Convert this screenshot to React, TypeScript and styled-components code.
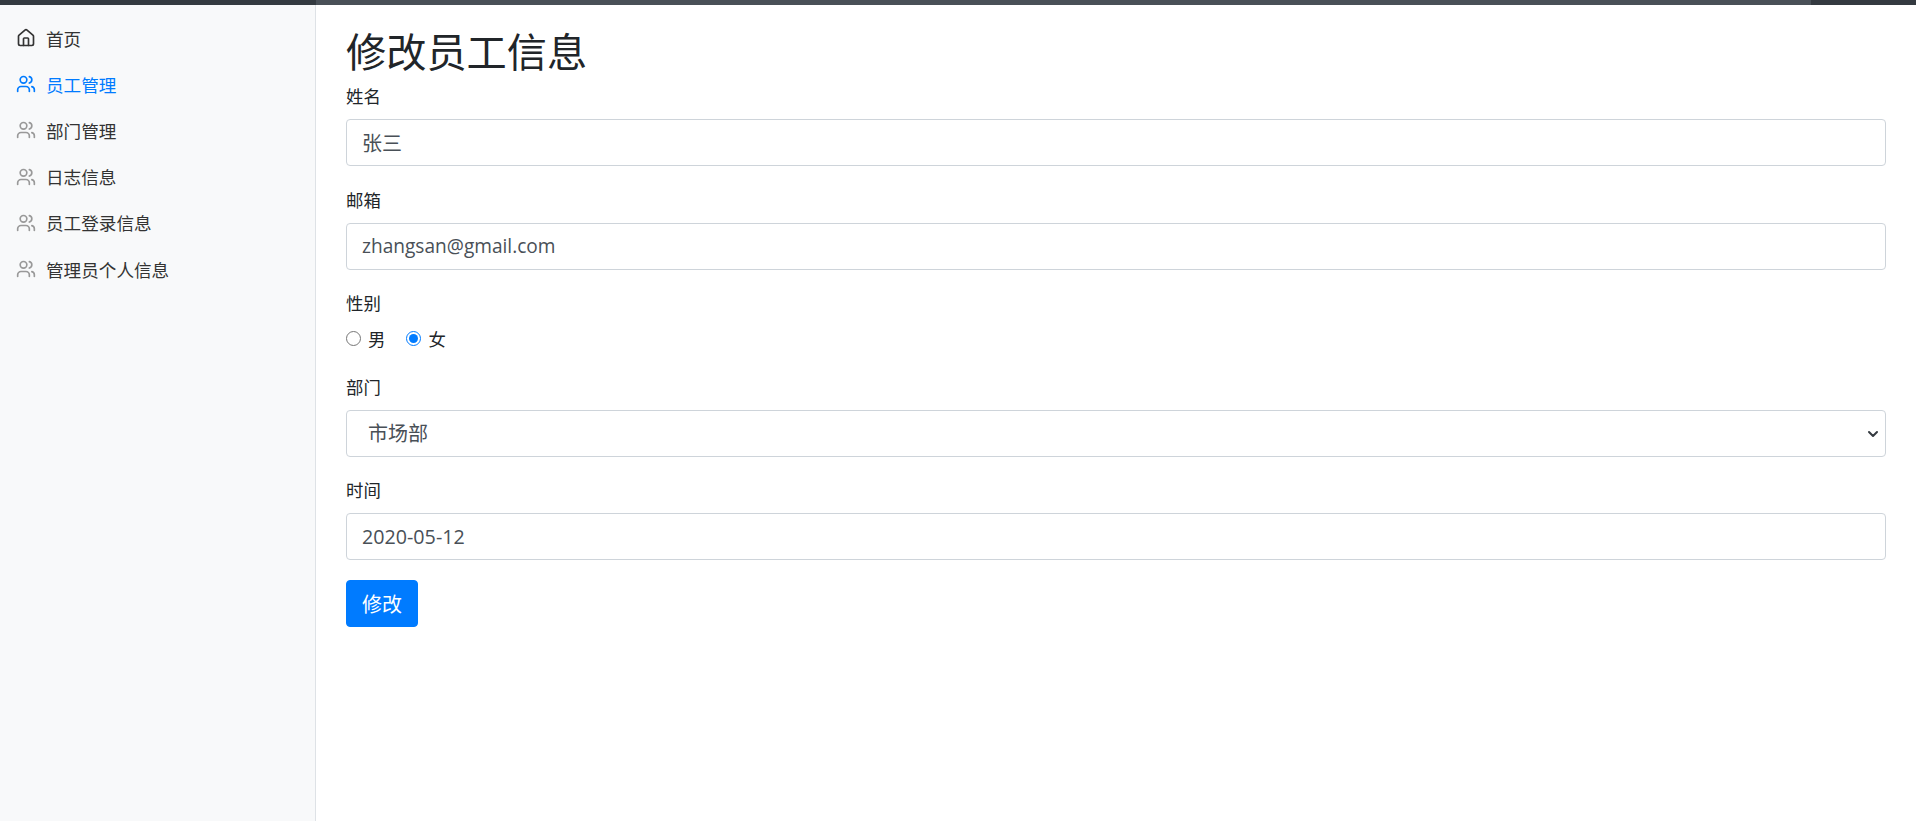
import styled, { createGlobalStyle } from 'styled-components';
import { ChevronDown, Home, Users } from 'lucide-react';

const GlobalStyle = createGlobalStyle`
  html,
  body {
    margin: 0;
    padding: 0;
    height: 100%;
    background: #fff;
  }

  body {
    font-family: 'Open Sans', 'Noto Sans CJK SC', sans-serif;
    font-size: 17.4px;
    color: #212529;
    overflow: hidden;
  }
`;

const Page = styled.div`
  display: flex;
  flex-direction: column;
  height: 821px;
`;

const TopBar = styled.div`
  display: flex;
  flex: 0 0 5px;
  background: #343a40;
`;

const Brand = styled.div`
  flex: 0 0 316px;
`;

const TopSearch = styled.div`
  flex: 1;
  background: #495057;
`;

const TopAction = styled.div`
  flex: 0 0 105px;
`;

const Body = styled.div`
  display: flex;
  flex: 1;
  min-height: 0;
`;

const Sidebar = styled.nav`
  flex: 0 0 316px;
  box-sizing: border-box;
  padding-top: 10px;
  background: #f8f9fa;
  border-right: 1px solid #dee2e6;
`;

const NavItem = styled.a<{ $active?: boolean; $strong?: boolean }>`
  display: flex;
  align-items: center;
  gap: 10px;
  height: 46.2px;
  padding-left: 16px;
  font-size: 17.6px;
  color: ${(p) => (p.$active ? '#007bff' : '#333')};

  svg {
    flex: none;
    color: ${(p) => (p.$active ? '#007bff' : p.$strong ? '#333' : '#999')};
  }
`;

const Main = styled.main`
  flex: 1;
  padding: 0 30px;
`;

const Title = styled.h2`
  margin: 0 0 9px;
  padding-top: 23px;
  font-size: 40.2px;
  font-weight: 400;
  line-height: 48px;
  color: #212529;
`;

const Form = styled.form`
  display: flex;
  flex-direction: column;
`;

const Group = styled.div`
  display: flex;
  flex-direction: column;
  margin-bottom: 22.6px;

  &:last-of-type {
    margin-bottom: 20px;
  }
`;

const Label = styled.label`
  margin-bottom: 12px;
  font-size: 17.4px;
  line-height: 22px;
`;

const fieldStyles = `
  box-sizing: border-box;
  width: 100%;
  height: 47px;
  border: 1px solid #ced4da;
  border-radius: 4px;
  background: #fff;
  font-family: 'Open Sans', 'Noto Sans CJK SC', sans-serif;
  color: #495057;
  outline: none;
`;

const TextInput = styled.input<{ $fontSize?: number }>`
  ${fieldStyles}
  padding: 0 15px;
  font-size: ${(p) => p.$fontSize ?? 20}px;
`;

const SelectWrap = styled.div`
  position: relative;
`;

const Select = styled.select`
  ${fieldStyles}
  padding: 0 21px;
  font-size: 20px;
  appearance: none;
`;

const SelectArrow = styled(ChevronDown)`
  position: absolute;
  top: 16px;
  right: 5px;
  color: #343a40;
  pointer-events: none;
`;

const RadioRow = styled.div`
  display: flex;
  align-items: center;
  gap: 21px;
  height: 25px;
  margin-bottom: 2px;
`;

const RadioLabel = styled.label`
  display: flex;
  align-items: center;
  gap: 7px;
  font-size: 17.4px;
`;

const Radio = styled.input`
  width: 15px;
  height: 15px;
  margin: 0;
  accent-color: #007bff;
`;

const SubmitButton = styled.button`
  align-self: flex-start;
  width: 72px;
  height: 47px;
  border: 1px solid #007bff;
  border-radius: 4px;
  background: #007bff;
  font-family: 'Open Sans', 'Noto Sans CJK SC', sans-serif;
  font-size: 20px;
  color: #fff;
`;

const navItems = ['员工管理', '部门管理', '日志信息', '员工登录信息', '管理员个人信息'];

const App = () => {
  return (
    <>
      <GlobalStyle />
      <Page>
        <TopBar>
          <Brand />
          <TopSearch />
          <TopAction />
        </TopBar>
        <Body>
          <Sidebar>
            <NavItem $strong>
              <Home size={20} strokeWidth={2} />
              首页
            </NavItem>
            {navItems.map((item, i) => (
              <NavItem key={item} $active={i === 0}>
                <Users size={20} strokeWidth={2} />
                {item}
              </NavItem>
            ))}
          </Sidebar>
          <Main>
            <Title>修改员工信息</Title>
            <Form>
              <Group>
                <Label>姓名</Label>
                <TextInput defaultValue="张三" />
              </Group>
              <Group>
                <Label>邮箱</Label>
                <TextInput $fontSize={19.1} defaultValue="zhangsan@gmail.com" />
              </Group>
              <Group>
                <Label>性别</Label>
                <RadioRow>
                  <RadioLabel>
                    <Radio type="radio" name="gender" />男
                  </RadioLabel>
                  <RadioLabel>
                    <Radio type="radio" name="gender" defaultChecked />女
                  </RadioLabel>
                </RadioRow>
              </Group>
              <Group>
                <Label>部门</Label>
                <SelectWrap>
                  <Select defaultValue="市场部">
                    <option>市场部</option>
                  </Select>
                  <SelectArrow size={16} strokeWidth={3} />
                </SelectWrap>
              </Group>
              <Group>
                <Label>时间</Label>
                <TextInput $fontSize={19.7} defaultValue="2020-05-12" />
              </Group>
              <SubmitButton type="button">修改</SubmitButton>
            </Form>
          </Main>
        </Body>
      </Page>
    </>
  );
};

export default App;
